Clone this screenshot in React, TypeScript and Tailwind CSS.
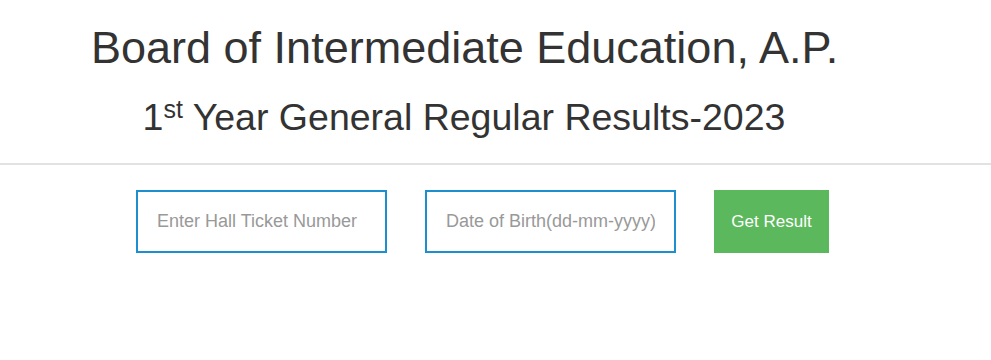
// Results lookup page: board title, year subtitle, divider, and the hall-ticket form.

const fieldClass =
  "h-[63px] w-[251px] border-2 border-[#1c8fd1] px-[19px] font-['Liberation_Sans',Arial,sans-serif] text-[18px] text-[#555] outline-none placeholder:text-[#999]";

export default function App() {
  return (
    <div className="min-h-[360px] bg-white font-['Liberation_Sans',Arial,sans-serif] text-[#333]">
      <header className="flex flex-col items-start">
        <h1 className="ml-[91px] mt-[22px] w-[746px] whitespace-nowrap text-center text-[45px] leading-[52px] font-normal">
          Board of Intermediate Education, A.P.
        </h1>
        <h2 className="ml-[91px] mt-[23px] w-[746px] whitespace-nowrap text-center text-[37.5px] leading-[40px] font-normal">
          1<sup className="text-[25px]">st</sup> Year General Regular Results-2023
        </h2>
      </header>
      <hr className="mt-[26px] border-t-2 border-[#e2e2e2]" />
      <form className="ml-[136px] mt-[25px] flex items-center">
        <input type="text" placeholder="Enter Hall Ticket Number" className={fieldClass} />
        <input type="text" placeholder="Date of Birth(dd-mm-yyyy)" className={`ml-[38px] ${fieldClass}`} />
        <button
          type="button"
          className="ml-[38px] h-[63px] w-[115px] bg-[#5cb85c] text-[17px] text-white"
        >
          Get Result
        </button>
      </form>
    </div>
  );
}
